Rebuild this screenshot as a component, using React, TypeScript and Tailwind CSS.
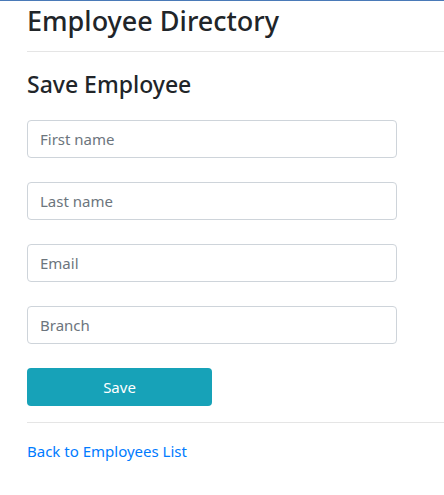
export default function App() {
  const fields = ["First name", "Last name", "Email", "Branch"];

  return (
    <div className="min-h-screen bg-white border-t border-[#4a7ab8] font-['Noto_Sans',sans-serif] text-[#212529]">
      <div className="pl-[27px]">
        <h1 className="text-[27px] font-medium leading-[40px] pt-[0px] pb-[10px]">Employee Directory</h1>
        <hr className="border-t border-[#e5e5e5]" />
        <h3 className="text-[23px] font-medium leading-[30px] mt-[17px] mb-[21px]">Save Employee</h3>
        <form className="flex flex-col gap-[24px] w-[370px]" onSubmit={(e) => e.preventDefault()}>
          {fields.map((f) => (
            <input
              key={f}
              type="text"
              placeholder={f}
              className="h-[38px] w-full rounded-[4px] border border-[#ced4da] px-[12px] text-[15px] placeholder:text-[#6c757d] outline-none"
            />
          ))}
          <button
            type="submit"
            className="h-[38px] w-[185px] rounded-[4px] bg-[#17a2b8] text-white text-[15px]"
          >
            Save
          </button>
        </form>
        <hr className="border-t border-[#e5e5e5] mt-[16px]" />
        <a href="#" className="inline-block mt-[17px] text-[15px] text-[#007bff]">
          Back to Employees List
        </a>
      </div>
    </div>
  );
}
